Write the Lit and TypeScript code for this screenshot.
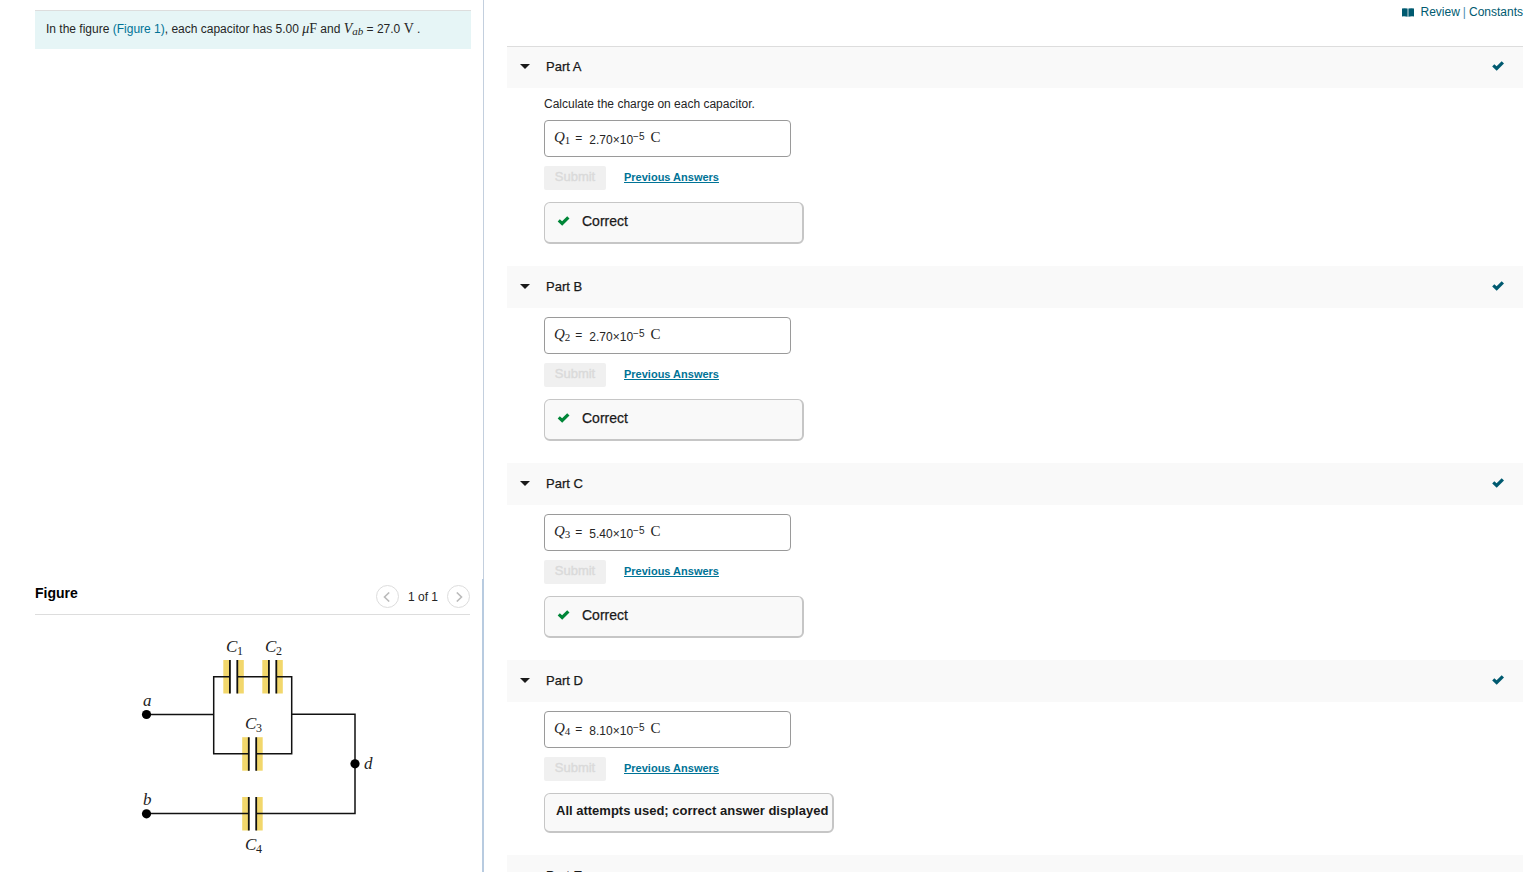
import { LitElement, html, css, svg, nothing } from "lit";
import { customElement, property } from "lit/decorators.js";

const CHECK = svg`<path d="M0.2 5.400 L2.300 3.200 L4.600 5.300 L9.700 0.300 L12 2.400 L4.700 9.800 Z" fill="currentColor" />`;

interface Part {
  letter: string;
  prompt?: string;
  index?: number;
  mantissa?: string;
  correct?: boolean;
}

const PARTS: Part[] = [
  { letter: "A", prompt: "Calculate the charge on each capacitor.", index: 1, mantissa: "2.70", correct: true },
  { letter: "B", index: 2, mantissa: "2.70", correct: true },
  { letter: "C", index: 3, mantissa: "5.40", correct: true },
  { letter: "D", index: 4, mantissa: "8.10", correct: false },
  { letter: "E" },
];

@customElement("circuit-figure")
class CircuitFigure extends LitElement {
  static styles = css`
    :host { display: block; }
    svg { display: block; margin: 0 auto; overflow: visible; }
    .wire { fill: none; stroke: #111; stroke-width: 1.5; }
    .plate { stroke: #111; stroke-width: 1.8; }
    .glow { fill: #f2d76c; }
    .name { font: italic 17px "Liberation Serif", serif; fill: #222; }
    .sub { font: 12px "Liberation Serif", serif; fill: #222; }
  `;

  capacitor(x: number, y: number) {
    return svg`
      <rect class="glow" x=${x} y=${y} width="7" height="33.5" />
      <rect class="glow" x=${x + 14} y=${y} width="6.5" height="33.5" />`;
  }

  plates(x: number, y: number) {
    return svg`
      <path class="plate" d="M${x + 6.6} ${y}v33.5M${x + 14} ${y}v33.5" />`;
  }

  label(x: number, y: number, n: number) {
    return svg`
      <text class="name" x=${x} y=${y}>C</text>
      <text class="sub" x=${x + 11} y=${y + 3}>${n}</text>`;
  }

  render() {
    const caps = [[223.3, 660], [262.3, 660], [242.2, 737.2], [242.2, 797]];
    return html`
      <svg width="241" height="226" viewBox="132 632 241 226" role="img" aria-label="Capacitor network">
        ${caps.map(([x, y]) => this.capacitor(x, y))}
        <path class="wire" d="M146.5 714.5H213.5M229.900 676.700H213.700V753.800H248.800M237.300 676.700H268.900M276.300 676.700H291.700V753.800H256.200M291.700 714.300H355V813.600H256.200M146.500 813.600H248.800" />
        ${caps.map(([x, y]) => this.plates(x, y))}
        <circle cx="146.5" cy="714.5" r="4.6" />
        <circle cx="146.5" cy="813.8" r="4.6" />
        <circle cx="355" cy="763.8" r="4.6" />
        ${this.label(226, 652, 1)}
        ${this.label(265, 652, 2)}
        ${this.label(245, 729, 3)}
        ${this.label(245, 850, 4)}
        <text class="name" x="143" y="706">a</text>
        <text class="name" x="143" y="805">b</text>
        <text class="name" x="364" y="769">d</text>
      </svg>`;
  }
}

@customElement("problem-part")
class ProblemPart extends LitElement {
  @property({ attribute: false }) part!: Part;
  @property({ type: Boolean }) first = false;

  static styles = css`
    :host { display: block; }
    .head {
      display: flex; align-items: center; justify-content: space-between;
      height: 42px; box-sizing: border-box; padding: 0 19px 2px 13px;
      background: #f9f9f9; color: #005a70;
    }
    .first { border-top: 1px solid #ddd; padding-bottom: 3px; }
    .title { margin: 0; font-size: 13px; font-weight: 400; }
    .toggle {
      display: flex; align-items: center; gap: 16px; padding: 0; border: 0;
      background: none; font: inherit; color: #1a1a1a; line-height: 20px;
      -webkit-text-stroke: 0.25px currentColor;
    }
    .name { padding-top: 1px; }
    .body { display: flex; flex-direction: column; align-items: flex-start; padding: 9px 16px 22px 37px; }
    .prompt { margin: 0 0 9px; line-height: 14px; }
    .answer {
      display: flex; align-items: baseline; box-sizing: border-box;
      width: 247px; height: 37px; padding: 7px 9px; border: 1px solid #9a9a9a;
      border-radius: 4px; background: #fff; line-height: 18px;
    }
    .math { font-family: "Liberation Serif", serif; font-size: 15px; }
    .var { font-style: italic; }
    .math sub { font-size: 11px; line-height: 0; vertical-align: -2px; }
    .eq { margin: 0 7px 0 5px; }
    .value { padding-top: 2px; align-self: flex-start; line-height: 20px; }
    .value sup { font-size: 10px; line-height: 0; vertical-align: 4px; }
    .unit { margin-left: 6px; }
    .actions { display: flex; align-items: center; gap: 18px; margin: 9px 0 12px; }
    .submit {
      width: 62px; height: 24px; padding: 0 0 3px; border: 0; border-radius: 2px;
      background: #f0f0f0; color: #dadada; font: 13px "Liberation Sans", Arial, sans-serif;
      -webkit-text-stroke: 0.4px currentColor;
    }
    .previous { padding-bottom: 2px; color: #007396; font-size: 11px; font-weight: 700; }
    .feedback {
      box-sizing: border-box; display: flex; align-items: center; gap: 12px;
      width: 290px; white-space: nowrap;
      padding: 9px 4px 12px 11px; border: 1px solid #c6c6c6; border-right-width: 2px; border-bottom-width: 2px;
      border-radius: 6px; background: #f9f9f9; color: #1a1a1a;
      font-size: 13px; font-weight: 700; line-height: 16px;
    }
    .correct {
      width: 260px; line-height: 18px; font-size: 14px; font-weight: 400; padding-left: 12px;
      -webkit-text-stroke: 0.25px currentColor;
    }
    .mark { color: #008638; }
  `;

  render() {
    const p = this.part;
    const title = html`<h2 class="title"><button class="toggle" aria-expanded="true">
      <svg width="10" height="5" viewBox="0 0 10 5" aria-hidden="true"><path d="M0 0h10L5 5z" fill="currentColor" /></svg>
      <span class="name">Part ${p.letter}</span></button></h2>`;
    return html`
      <div class="head ${this.first ? "first" : ""}">
        ${title}
        ${p.index ? html`<svg width="12" height="10" viewBox="0 0 12 10" role="img" aria-label="Complete">${CHECK}</svg>` : nothing}
      </div>
      ${p.index
        ? html`<div class="body">
            ${p.prompt ? html`<p class="prompt">${p.prompt}</p>` : nothing}
            <div class="answer">
              <span class="math"><span class="var">Q</span><sub>${p.index}</sub></span>
              <span class="eq">=</span>
              <span class="value">${p.mantissa}×10<sup>−5</sup></span>
              <span class="math unit">C</span>
            </div>
            <div class="actions">
              <button class="submit" disabled>Submit</button>
              <a class="previous" href="#">Previous Answers</a>
            </div>
            ${p.correct
              ? html`<div class="feedback correct" role="status">
                  <svg class="mark" width="13" height="10" viewBox="0 0 12 10" aria-hidden="true">${CHECK}</svg>Correct
                </div>`
              : html`<div class="feedback" role="status">All attempts used; correct answer displayed</div>`}
          </div>`
        : nothing}`;
  }
}

@customElement("app-root")
class AppRoot extends LitElement {
  static styles = css`
    :host {
      display: grid; grid-template-columns: 484px minmax(0, 1fr);
      height: 100vh; overflow: hidden; background: #fff; color: #252525;
      font: 12px "Liberation Sans", Arial, sans-serif;
    }
    a { color: #007396; text-decoration: none; }
    .side { display: flex; flex-direction: column; justify-content: space-between; min-height: 0; }
    .intro { flex: 1; padding: 10px 12px 0 35px; border-right: 1px solid #c3cfde; }
    .statement {
      margin: 0; padding: 9px 11px 11px; border-top: 1px solid #ddd;
      background: #e6f5f6; line-height: 18px;
    }
    .math { font-family: "Liberation Serif", serif; font-size: 14px; line-height: 0; }
    .math sub { font-size: 11px; vertical-align: -2px; }
    .figure { height: 293px; box-sizing: border-box; padding: 0 12px 0 35px; border-right: 2px solid #b8cbe0; }
    .figure-head {
      display: flex; justify-content: space-between; align-items: center;
      height: 36px; box-sizing: border-box; border-bottom: 1px solid #ddd;
      margin-bottom: 17px;
    }
    .figure-title { margin: 0; padding-bottom: 7px; font-size: 14px; color: #000; }
    .pager { display: flex; align-items: center; gap: 9px; }
    .page {
      display: flex; align-items: center; justify-content: center;
      width: 23px; height: 23px; padding: 0; border: 1px solid #ddd; border-radius: 50%;
      background: #fff; color: #bbb;
    }
    .main { min-width: 0; padding: 0 15px 0 23px; overflow: hidden; }
    .top { display: flex; align-items: center; justify-content: flex-end; height: 46px; padding-bottom: 22px; box-sizing: border-box; color: #005a70; }
    .top a { color: #005a70; }
    .book { margin-right: 6px; }
    .bar { margin: 0 3px; color: #4b8fb5; }
  `;

  render() {
    return html`
      <aside class="side">
        <section class="intro">
          <p class="statement">In the figure <a href="#figure">(Figure 1)</a>, each capacitor has 5.00 <span class="math"><i>μ</i>F</span> and <span class="math"><i>V</i><sub><i>ab</i></sub></span> = 27.0 <span class="math">V</span> .</p>
        </section>
        <section class="figure" id="figure">
          <header class="figure-head">
            <h2 class="figure-title">Figure</h2>
            <nav class="pager" aria-label="Figures">
              <button class="page" aria-label="Previous figure" disabled>
                <svg width="8" height="10" viewBox="0 0 8 10" fill="none" stroke="currentColor" stroke-width="1.6"><path d="M6.200 0.500L1.500 5L6.200 9.500" /></svg>
              </button>
              <span>1 of 1</span>
              <button class="page" aria-label="Next figure" disabled>
                <svg width="8" height="10" viewBox="0 0 8 10" fill="none" stroke="currentColor" stroke-width="1.6"><path d="M1.800 0.500L6.500 5L1.800 9.500" /></svg>
              </button>
            </nav>
          </header>
          <circuit-figure></circuit-figure>
        </section>
      </aside>
      <main class="main">
        <nav class="top" aria-label="Resources">
          <svg class="book" width="12" height="9" viewBox="0 0 12 9" aria-hidden="true">
            <path d="M0 0.400Q3 -0.200 5.600 0.600V8.800Q3 8 0 8.400ZM6.400 0.600Q9 -0.200 12 0.400V8.400Q9 8 6.400 8.800Z" fill="currentColor" />
          </svg>
          <a href="#">Review</a><span class="bar">|</span><a href="#">Constants</a>
        </nav>
        ${PARTS.map((part, i) => html`<problem-part .part=${part} ?first=${i === 0}></problem-part>`)}
      </main>`;
  }
}
